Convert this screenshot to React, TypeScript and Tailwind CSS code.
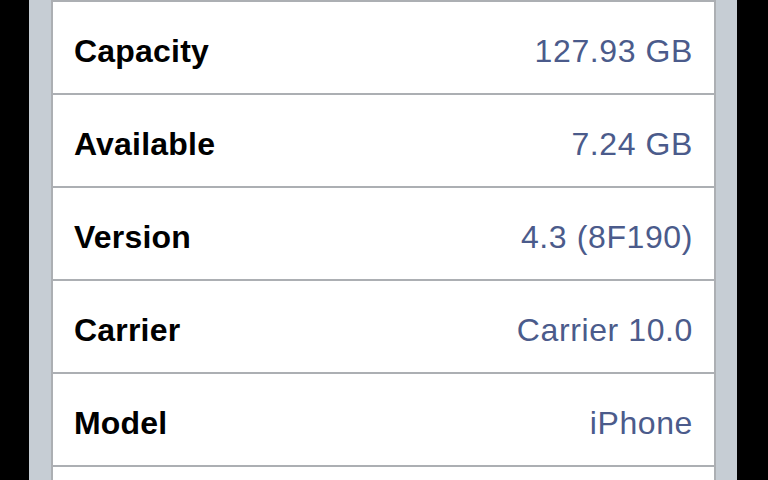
const ROWS = [
  { label: 'Capacity', value: '127.93 GB' },
  { label: 'Available', value: '7.24 GB' },
  { label: 'Version', value: '4.3 (8F190)' },
  { label: 'Carrier', value: 'Carrier 10.0' },
  { label: 'Model', value: 'iPhone' },
  { label: '', value: '' },
];

export default function App() {
  return (
    <div className="flex h-[480px] w-[768px] overflow-hidden bg-black font-['Liberation_Sans',Arial,sans-serif]">
      <div className="w-[29px] shrink-0 bg-black" />
      <div className="flex flex-1 bg-[#c6cdd4] pl-[22px] pr-[21px]">
        <div className="flex-1 border-x-2 border-t-2 border-[#acafb3] bg-white">
          {ROWS.map((row, i) => (
            <div
              key={i}
              className="flex h-[93px] items-center justify-between border-b-2 border-[#acafb3] pl-[21px] pr-[21px] pt-[7px]"
            >
              <span className="text-[32px] font-bold tracking-[0.2px] text-black">{row.label}</span>
              <span className="text-[32px] tracking-[0.6px] text-[#4b5b8b]">{row.value}</span>
            </div>
          ))}
        </div>
      </div>
      <div className="w-[31px] shrink-0 bg-black" />
    </div>
  );
}
